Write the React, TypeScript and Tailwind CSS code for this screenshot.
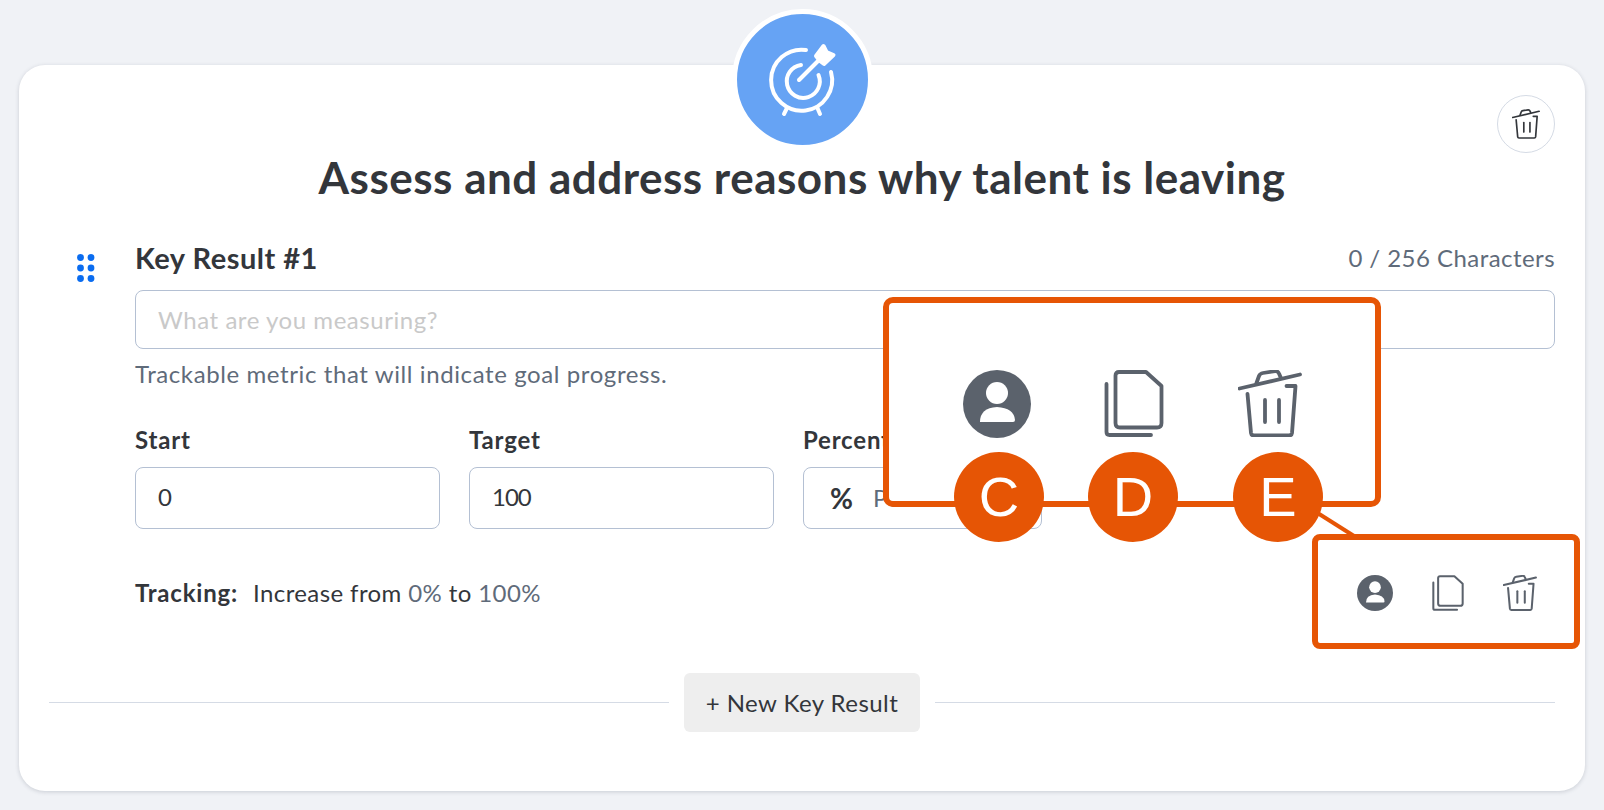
import React from 'react';

const TrashIcon: React.FC<{ className?: string; stroke?: string }> = ({ className, stroke = 'currentColor' }) => (
  <svg viewBox="0 0 64 67" fill="none" stroke={stroke} strokeWidth={3.8} strokeLinecap="round" strokeLinejoin="round" className={className}>
    <path d="M1.5 18.5 L62 4.5" />
    <path d="M18.5 13 L21 6 Q22 3.5 25 3 L37 1.2 Q40 1 41 3.5 L42.5 7" />
    <path d="M9.5 24 L13 63 Q13.3 65.5 16 65.5 L51 65.5 Q53.7 65.5 54 63 L57.5 16 L48.5 16" />
    <path d="M27 30 L27 52" />
    <path d="M41 30 L41 52" />
  </svg>
);

const CopyIcon: React.FC<{ className?: string }> = ({ className }) => (
  <svg viewBox="0 0 60 67" fill="none" stroke="currentColor" strokeWidth={3.8} strokeLinecap="round" strokeLinejoin="round" className={className}>
    <path d="M15 2 L42 2 L57.5 16 L57.5 53 Q57.5 57.5 53 57.5 L16 57.5 Q11.5 57.5 11.5 53 L11.5 5.5 Q11.5 2 15 2 Z" />
    <path d="M2.5 14 L2.5 62 Q2.5 65 5.5 65 L47 65" />
  </svg>
);

const AvatarIcon: React.FC<{ className?: string }> = ({ className }) => (
  <svg viewBox="0 0 68 68" className={className}>
    <circle cx="34" cy="34" r="34" fill="#5b626c" />
    <circle cx="34" cy="23" r="11" fill="#fff" />
    <path d="M17 52 Q17 38 34 37 Q51 38 52 50 Q52 52 50 52 Z" fill="#fff" />
  </svg>
);

const TargetIcon: React.FC = () => (
  <svg viewBox="-50 -50 100 100" fill="none" stroke="#fff" strokeWidth={4} strokeLinecap="round" strokeLinejoin="round" className="h-[100px] w-[100px]">
    <path d="M4 -30 A30.5 30.5 0 1 0 29 -8" />
    <path d="M-1 -15 A16.5 16.5 0 1 0 16.5 -5" />
    <path d="M-3 0 L17 -20" />
    <path d="M14 -24 L21.5 -34 L24.5 -28 L31.5 -25 L22 -16 L18 -19 Z" fill="#fff" />
    <path d="M-15 28 L-18 34" />
    <path d="M15 27 L18 34" />
  </svg>
);

const DragDots: React.FC = () => (
  <svg viewBox="0 0 20 30" className="h-[30px] w-[20px]">
    {[3.5, 14].map(cx =>
      [3.5, 14, 24.5].map(cy => <circle key={`${cx}-${cy}`} cx={cx} cy={cy} r={3.4} fill="#0a6cf0" />)
    )}
  </svg>
);

const Field: React.FC<{ label: string; value: string }> = ({ label, value }) => (
  <div className="w-[305px]">
    <p className="text-[24px] leading-[28px] font-bold tracking-[0.8px] text-[#33363b]">{label}</p>
    <div className="mt-[13px] flex h-[62px] items-center rounded-[8px] border border-[#b4c0d3] pb-[2px] pl-[22px] text-[24px] tracking-[-1px] text-[#33363b]">
      {value}
    </div>
  </div>
);

const Marker: React.FC<{ letter: string; className: string }> = ({ letter, className }) => (
  <div className={`absolute top-[452px] flex h-[90px] w-[90px] items-center justify-center rounded-full bg-[#e65505] font-['Liberation_Sans',sans-serif] text-[56px] text-white ${className}`}>
    {letter}
  </div>
);

export default function App() {
  return (
    <div className="relative h-[810px] w-[1604px] overflow-hidden bg-[#f0f2f6] px-[19px] pt-[65px] font-['Lato',sans-serif] text-[#33363b]">
      <div className="relative flex h-[726px] flex-col rounded-[26px] bg-white px-[30px] shadow-[0_1px_4px_rgba(50,60,80,0.2)]">
        <div className="mx-auto -mt-[56px] flex h-[141px] w-[141px] shrink-0 items-center justify-center rounded-full border-[5.5px] border-white bg-[#66a3f4]">
          <TargetIcon />
        </div>
        <button className="absolute top-[30px] right-[30px] flex h-[58px] w-[58px] items-center justify-center rounded-full border border-[#d5dbe5]">
          <TrashIcon className="h-[30px] w-[28px]" />
        </button>

        <h1 className="text-center text-[44px] leading-[54px] font-bold tracking-[0.5px]">
          Assess and address reasons why talent is leaving
        </h1>

        <div className="mt-[36px] flex">
          <div className="w-[86px] pt-[14px] pl-[28px]">
            <DragDots />
          </div>
          <div className="flex-1">
            <div className="flex items-center justify-between">
              <p className="text-[29px] leading-[36px] font-bold tracking-[0.5px]">Key Result #1</p>
              <p className="text-[24px] tracking-[0.45px] text-[#5f6b7a]">0 / 256 Characters</p>
            </div>
            <div className="mt-[14px] flex h-[59px] items-center rounded-[8px] border border-[#b4c0d3] pl-[22px] text-[24px] tracking-[0.55px] text-[#c9c9c9]">
              What are you measuring?
            </div>
            <p className="mt-[10px] text-[24px] leading-[30px] tracking-[0.6px] text-[#5f6b7a]">
              Trackable metric that will indicate goal progress.
            </p>

            <div className="mt-[37px] flex gap-[29px]">
              <Field label="Start" value="0" />
              <Field label="Target" value="100" />
              <div className="w-[239px]">
                <p className="text-[24px] leading-[28px] font-bold tracking-[0.8px]">Percent</p>
                <div className="mt-[13px] flex h-[62px] items-center rounded-[8px] border border-[#b4c0d3] pl-[26px] text-[24px] tracking-[0.4px] text-[#5f6b7a]">
                  <span className="w-[43px] text-[28px] font-bold text-[#33363b]">%</span>
                  Percent
                </div>
              </div>
            </div>

            <p className="mt-[49px] text-[24px] leading-[30px] tracking-[0.4px]">
              <span className="font-bold tracking-[0.8px]">Tracking:</span>
              <span className="ml-[15px]">Increase from </span>
              <span className="text-[#5f6b7a]">0%</span> to <span className="text-[#5f6b7a]">100%</span>
            </p>
          </div>
        </div>

        <div className="mt-[65px] flex items-center gap-[15px]">
          <div className="h-px flex-1 bg-[#d5dbe5]" />
          <button className="flex h-[59px] w-[236px] items-center justify-center rounded-[6px] bg-[#eeeeee] text-[24px] tracking-[0.45px]">
            + New Key Result
          </button>
          <div className="h-px flex-1 bg-[#d5dbe5]" />
        </div>
      </div>

      {/* callout, sits over the form */}
      <div className="absolute top-[297px] left-[883px] h-[210px] w-[498px] rounded-[10px] border-[6px] border-[#e65505] bg-white" />
      <div className="absolute top-[370px] left-[963px] h-[68px] w-[68px]">
        <AvatarIcon className="h-full w-full" />
      </div>
      <CopyIcon className="absolute top-[370px] left-[1104px] h-[67px] w-[60px] text-[#5b626c]" />
      <TrashIcon className="absolute top-[370px] left-[1238px] h-[67px] w-[64px] text-[#5b626c]" />
      <Marker letter="C" className="left-[954px]" />
      <Marker letter="D" className="left-[1088px]" />
      <Marker letter="E" className="left-[1233px]" />
      <svg viewBox="0 0 44 30" className="absolute top-[510px] left-[1314px] h-[30px] w-[44px]">
        <path d="M2 2 L40 26" stroke="#e65505" strokeWidth={4} />
      </svg>
      <div className="absolute top-[534px] left-[1312px] flex h-[115px] w-[268px] items-center rounded-[8px] border-[6px] border-[#e65505] bg-white">
        <AvatarIcon className="absolute top-[35px] left-[39px] h-[36px] w-[36px]" />
        <CopyIcon className="absolute top-[35px] left-[114px] h-[36px] w-[32px] text-[#5b626c]" />
        <TrashIcon className="absolute top-[35px] left-[185px] h-[36px] w-[34px] text-[#5b626c]" />
      </div>
    </div>
  );
}
